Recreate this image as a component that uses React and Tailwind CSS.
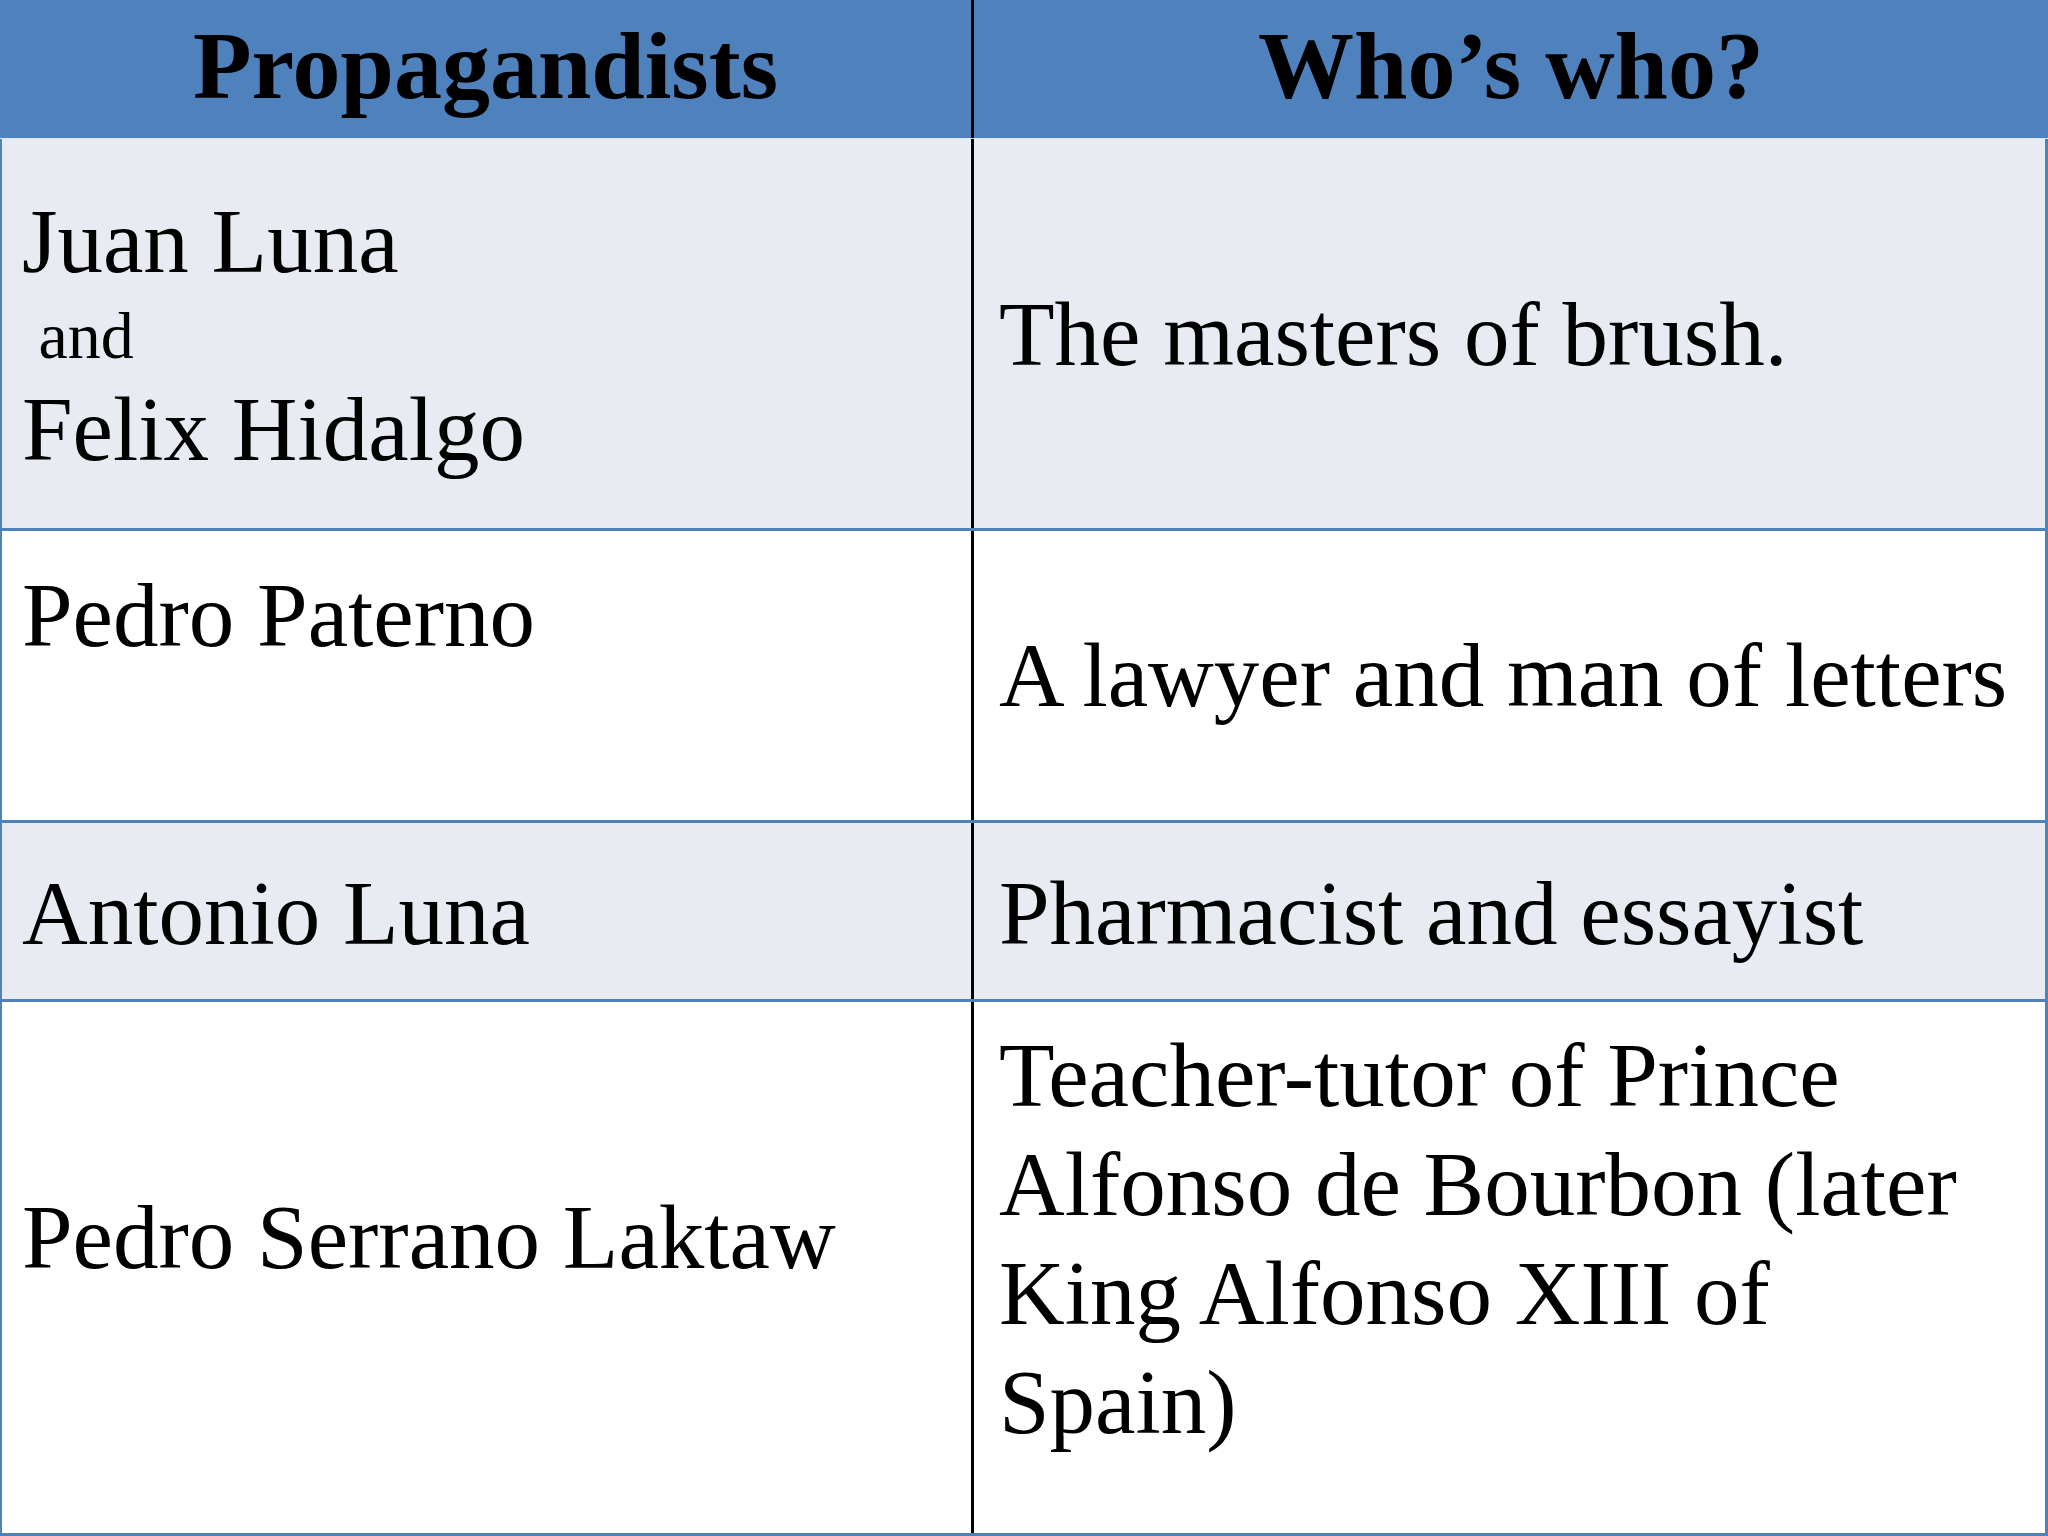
const serif = "font-['Liberation_Serif','Times_New_Roman',serif] text-black";

function Row({ bg, height, children }) {
  return (
    <div className={`flex ${height} ${bg} border-b-[3px] border-[#4f81bd]`}>
      {children}
    </div>
  );
}

export default function App() {
  return (
    <div className={`w-[2048px] h-[1536px] bg-white flex flex-col ${serif}`}>
      {/* header */}
      <div className="flex h-[139px] bg-[#4f81bd] border-b border-[#dfe6f1]">
        <div className="w-[974px] border-r-[3px] border-black flex items-center justify-center pb-[7px]">
          <span className="text-[96px] font-bold leading-[106px]">Propagandists</span>
        </div>
        <div className="flex-1 flex items-center justify-center pb-[7px]">
          <span className="text-[96px] font-bold leading-[106px]">Who’s who?</span>
        </div>
      </div>

      <div className="flex-1 flex flex-col border-l-2 border-r-[3px] border-[#4f81bd]">
        <Row bg="bg-[#e9ebf3]" height="h-[392px]">
          <div className="w-[972px] border-r-[3px] border-black flex flex-col justify-center pl-[20px] pt-[4px]">
            <div className="text-[91px] leading-[108px] whitespace-nowrap">Juan Luna</div>
            <div className="text-[66px] leading-[80px] whitespace-pre"> and</div>
            <div className="text-[91px] leading-[108px] whitespace-nowrap">Felix Hidalgo</div>
          </div>
          <div className="flex-1 flex items-center pl-[25px] pt-[2px]">
            <div className="text-[91px] leading-[108px] whitespace-nowrap">The masters of brush.</div>
          </div>
        </Row>

        <Row bg="bg-white" height="h-[292px]">
          <div className="w-[972px] border-r-[3px] border-black pl-[20px] pt-[31px]">
            <div className="text-[91px] leading-[108px] whitespace-nowrap">Pedro Paterno</div>
          </div>
          <div className="flex-1 flex items-center pl-[25px]">
            <div className="text-[91px] leading-[108px] whitespace-nowrap">A lawyer and man of letters</div>
          </div>
        </Row>

        <Row bg="bg-[#e9ebf3]" height="h-[179px]">
          <div className="w-[972px] border-r-[3px] border-black flex items-center pl-[20px] pt-[5px]">
            <div className="text-[91px] leading-[108px] whitespace-nowrap">Antonio Luna</div>
          </div>
          <div className="flex-1 flex items-center pl-[25px] pt-[5px]">
            <div className="text-[91px] leading-[108px] whitespace-nowrap">Pharmacist and essayist</div>
          </div>
        </Row>

        <Row bg="bg-white" height="flex-1">
          <div className="w-[972px] border-r-[3px] border-black pl-[20px] pt-[182px]">
            <div className="text-[91px] leading-[108px] whitespace-nowrap">Pedro Serrano Laktaw</div>
          </div>
          <div className="flex-1 pl-[25px] pt-[19px] text-[91px] leading-[109px] whitespace-nowrap">
            <div>Teacher-tutor of Prince</div>
            <div>Alfonso de Bourbon (later</div>
            <div>King Alfonso XIII of</div>
            <div>Spain)</div>
          </div>
        </Row>
      </div>
    </div>
  );
}
